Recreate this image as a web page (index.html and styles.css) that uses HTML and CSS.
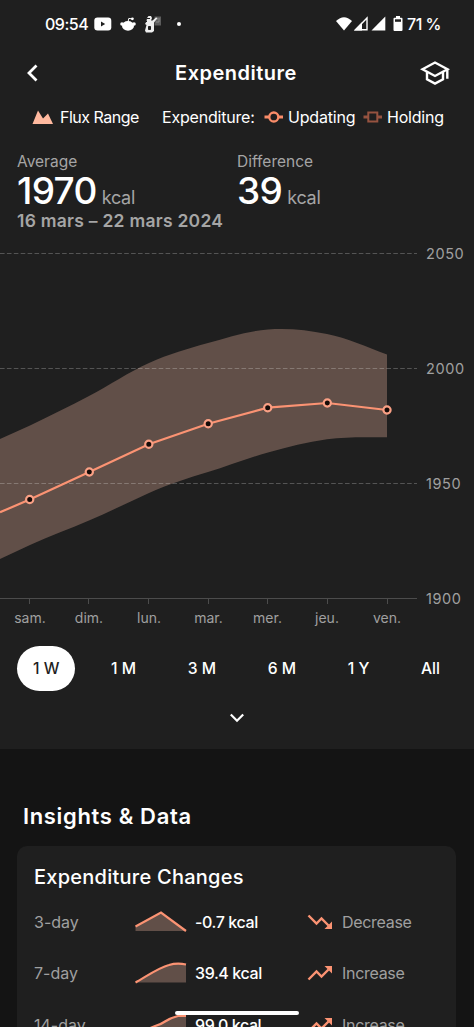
FILE: index.html
```html
<!DOCTYPE html>
<html lang="en">
  <head>
    <meta charset="UTF-8" />
    <meta name="viewport" content="width=device-width, initial-scale=1.0" />
    <title>Expenditure</title>
    <link rel="stylesheet" href="styles.css">
  </head>
  <body>
    <div class="top-panel">
      <!-- Status bar -->
      <div class="status-bar">
        <span class="clock">09:54</span>
        <svg class="icon-video" width="18" height="14" viewBox="0 0 18 14">
          <rect x="0.3" y="0.5" width="17" height="13" rx="3.2" fill="#fff" />
          <path d="M7 4.600v4.800L11.200 7z" fill="#1f1f1f" />
        </svg>
        <svg class="icon-alien" width="16" height="16" viewBox="0 0 16 16">
          <ellipse cx="8" cy="9.900" rx="6" ry="4.800" fill="#fff" />
          <circle cx="2" cy="8" r="1.800" fill="#fff" />
          <circle cx="14" cy="8" r="1.800" fill="#fff" />
          <path d="M8 6l.8-3.600 3.200.5" fill="none" stroke="#fff" stroke-width="1" />
          <circle cx="12.400" cy="2.800" r="1.400" fill="#fff" />
        </svg>
        <svg class="icon-game" width="18" height="18" viewBox="0 0 18 18">
          <rect x="10.500" y="1.500" width="6.500" height="9" fill="#5c5c5c" />
          <path d="M12 4h2M15 3v4M12 7h3" stroke="#888" stroke-width="1" />
          <path d="M3 3l1.500-2H7l1 2-1 2.500h1.500L12 2.500l1.500.5L10 7.500v8.500l-2 1.500H2L1 15.500 2.500 10 1 9l1.500-2.500z" fill="#eee" />
          <path d="M3 3.500h3M4.500 11.500h2v3h-2zM1 6.500h2" stroke="#1f1f1f" stroke-width="1" fill="#1f1f1f" />
        </svg>
        <span class="dot"></span>
        <svg class="icon-signal" width="68" height="18" viewBox="0 0 68 18">
          <path d="M1 6Q9 -1.600 17 6L9 15.600z" fill="#fff" />
          <path d="M20.500 14.800L32 3v11.800z" fill="none" stroke="#fff" stroke-width="1.400" />
          <path d="M19 15.500l8-8.200v8.200z" fill="#fff" />
          <path d="M36.500 15.500L50.300 1.500v14z" fill="#fff" />
          <path d="M61 1h4v1.700h1.500q1 0 1 1V15q0 1-1 1h-7q-1 0-1-1V3.700q0-1 1-1H61z" fill="#fff" />
          <path d="M60 4.300h6v2.500h-6z" fill="#1f1f1f" />
        </svg>
        <span class="battery">71 %</span>
      </div>

      <!-- Header -->
      <header class="header">
        <svg width="24" height="24" viewBox="0 0 24 24">
          <path d="M16.500 4.500L9 12l7.500 7.500" fill="none" stroke="#fff" stroke-width="2.800" />
        </svg>
        <h1>Expenditure</h1>
        <svg width="30" height="26" viewBox="0 0 30 26">
          <path d="M2.500 9.300L15 2.500l12.500 6.800L15 16z" fill="none" stroke="#fff" stroke-width="2.400" />
          <path d="M7 12v7.200l8 4.400 8-4.400V12M27.300 9.300v9.500" fill="none" stroke="#fff" stroke-width="2.400" />
        </svg>
      </header>

      <!-- Legend -->
      <div class="legend">
        <svg width="22" height="16" viewBox="0 0 22 16">
          <path d="M0.500 15L6 1.500l5 8 5-5 5 10.500z" fill="#ffb99f" />
        </svg>
        <span class="legend-flux">Flux Range</span>
        <span class="legend-title">Expenditure:</span>
        <svg width="20" height="14" viewBox="0 0 20 14">
          <path d="M0.500 7h5M14 7h5" stroke="#f98c69" stroke-width="3" />
          <circle cx="9.800" cy="7" r="4.500" fill="none" stroke="#f98c69" stroke-width="2.300" />
        </svg>
        <span class="legend-updating">Updating</span>
        <svg width="20" height="14" viewBox="0 0 20 14">
          <path d="M0.500 7h5M14 7h5" stroke="#965340" stroke-width="3" />
          <rect x="5.300" y="2.500" width="9" height="9" fill="none" stroke="#965340" stroke-width="2" />
        </svg>
        <span class="legend-holding">Holding</span>
      </div>

      <!-- Stats -->
      <div class="stats">
        <div class="stat">
          <p class="stat-label">Average</p>
          <p class="stat-value">1970 <small>kcal</small></p>
          <p class="stat-dates">16 mars – 22 mars 2024</p>
        </div>
        <div class="stat">
          <p class="stat-label">Difference</p>
          <p class="stat-value">39 <small>kcal</small></p>
        </div>
      </div>

      <!-- Chart -->
      <svg class="chart" width="474" height="390" viewBox="0 0 474 390">
        <path class="band" d="M0 199C10 194.500 20 190 30 185.500C50 175.900 69 166.500 89 156C109 145.400 129 132 149 123C169 114 188 108.600 208 103C228 97.400 248 91 268 89.500C288 88 307 90 327 94C347 98 367 107 387 114.500V197.300C367 197.300 347 196.500 327 199.300C307 202 288 207 268 212.500C248 218 228 226 208 232C188 238 169 244 149 253C129 262 109 272 89 280.500C69 289 50 296 30 305C20 310 10 314 0 319z" />
        <path class="grid" d="M0 13.500H417M0 128.500H417M0 243.500H417" />
        <path class="axis" d="M0 358.500H417M29.500 358v6M88.500 358v6M148.500 358v6M208.500 358v6M267.500 358v6M327.500 358v6M387.500 358v6" />
        <polyline class="line" points="0,272.300 29.700,259.500 89.300,232 148.800,204.300 208.200,183.700 267.700,167.700 327.300,163 387,170" />
        <g class="markers">
          <circle cx="29.700" cy="259.500" r="3.600" />
          <circle cx="89.300" cy="232" r="3.600" />
          <circle cx="148.800" cy="204.300" r="3.600" />
          <circle cx="208.200" cy="183.700" r="3.600" />
          <circle cx="267.700" cy="167.700" r="3.600" />
          <circle cx="327.300" cy="163" r="3.600" />
          <circle cx="387" cy="170" r="3.600" />
        </g>
        <g class="y-labels">
          <text x="426" y="19">2050</text>
          <text x="426" y="134">2000</text>
          <text x="426" y="249">1950</text>
          <text x="426" y="364">1900</text>
        </g>
        <g class="x-labels">
          <text x="30" y="383">sam.</text>
          <text x="89" y="383">dim.</text>
          <text x="149" y="383">lun.</text>
          <text x="208.500" y="383">mar.</text>
          <text x="267.500" y="383">mer.</text>
          <text x="327" y="383">jeu.</text>
          <text x="387" y="383">ven.</text>
        </g>
      </svg>

      <!-- Time range -->
      <div class="ranges">
        <button class="active">1 W</button>
        <button>1 M</button>
        <button>3 M</button>
        <button>6 M</button>
        <button>1 Y</button>
        <button>All</button>
      </div>
      <svg class="chevron" width="20" height="14" viewBox="0 0 20 14">
        <path d="M3.800 3.500L10 9.800l6.200-6.300" fill="none" stroke="#fff" stroke-width="2.200" />
      </svg>
    </div>

    <!-- Insights -->
    <section class="insights">
      <h2>Insights &amp; Data</h2>
      <div class="card">
        <h3>Expenditure Changes</h3>
        <div class="row">
          <span class="period">3-day</span>
          <svg width="52" height="24" viewBox="0 0 52 24">
            <path class="band" d="M0.500 16.500L26 2.500l25 18.500H0.500z" />
            <path class="line" d="M0.500 16.500L26 2.500l25 18.500" />
          </svg>
          <span class="amount">-0.7 kcal</span>
          <svg width="26" height="18" viewBox="0 0 26 18">
            <path class="trend" d="M1.500 2.500l8 8 5-5 7 7" />
            <path class="trend-head" d="M25 8.500V16h-7.500z" />
          </svg>
          <span class="trend-text">Decrease</span>
        </div>
        <div class="row">
          <span class="period">7-day</span>
          <svg width="52" height="24" viewBox="0 0 52 24">
            <path class="band" d="M0.500 21.500C12 15 24 6.500 34 4Q42 1.500 51 3.500V21.500z" />
            <path class="line" d="M0.500 21.500C12 15 24 6.500 34 4Q42 1.500 51 3.500" />
          </svg>
          <span class="amount">39.4 kcal</span>
          <svg width="26" height="18" viewBox="0 0 26 18">
            <path class="trend" d="M1.500 15.500l8-8 5 5 7-7" />
            <path class="trend-head" d="M25 9.500V2h-7.500z" />
          </svg>
          <span class="trend-text">Increase</span>
        </div>
        <div class="row">
          <span class="period">14-day</span>
          <svg width="52" height="24" viewBox="0 0 52 24">
            <path class="band" d="M0.500 21.500L20 13Q25 12 30 8.500T43 3H51V21.500z" />
            <path class="line" d="M0.500 21.500L20 13Q25 12 30 8.500T43 3H51" />
          </svg>
          <span class="amount">99.0 kcal</span>
          <svg width="26" height="18" viewBox="0 0 26 18">
            <path class="trend" d="M1.500 15.500l8-8 5 5 7-7" />
            <path class="trend-head" d="M25 9.500V2h-7.500z" />
          </svg>
          <span class="trend-text">Increase</span>
        </div>
      </div>
    </section>

    <div class="home-bar"></div>
  </body>
</html>
```
FILE: styles.css
```css
* {
  margin: 0;
  padding: 0;
  box-sizing: border-box;
}

body {
  width: 474px;
  height: 1027px;
  overflow: hidden;
  background-color: #141414;
  color: #fff;
  font-family: Inter, "Liberation Sans", sans-serif;
  white-space: nowrap;
}

svg {
  display: block;
  flex-shrink: 0;
}

.top-panel {
  height: 749px;
  background-color: #1f1f1f;
}

/* Status bar */
.status-bar {
  display: flex;
  align-items: center;
  height: 48px;
  padding-left: 45px;
  font-size: 16px;
  font-weight: 500;
  letter-spacing: -0.5px;
}

.clock {
  width: 49px;
}

.icon-alien {
  margin-left: 8px;
}

.icon-game {
  margin-left: 8px;
}

.dot {
  width: 4px;
  height: 4px;
  margin-left: 15px;
  border-radius: 50%;
  background-color: #fff;
}

.icon-signal {
  margin-left: 154px;
}

.battery {
  margin-left: 4px;
}

/* Header */
.header {
  display: flex;
  justify-content: space-between;
  align-items: center;
  height: 50px;
  padding: 0 24px 0 20px;
}

.header h1 {
  font-size: 20px;
  font-weight: 600;
  letter-spacing: 0.5px;
  padding-left: 8px;
}

/* Legend */
.legend {
  display: flex;
  align-items: center;
  height: 38px;
  padding-left: 32px;
  font-size: 16px;
  letter-spacing: -0.2px;
}

.legend-flux {
  width: 102px;
  margin-left: 6px;
  letter-spacing: -0.5px;
}

.legend-title {
  width: 102px;
}

.legend-updating {
  width: 75px;
  margin-left: 4px;
}

.legend-holding {
  margin-left: 4px;
}

/* Stats */
.stats {
  display: grid;
  grid-template-columns: 220px 1fr;
  height: 104px;
  padding: 16px 17px 0;
  color: #a5a5a5;
}

.stat-label {
  font-size: 15.5px;
  line-height: 20px;
}

.stat-value {
  color: #fff;
  font-size: 37px;
  font-weight: 450;
  letter-spacing: -0.7px;
  line-height: 38px;
  word-spacing: -4px;
}

.stat-value small {
  color: #a5a5a5;
  font-size: 18px;
  font-weight: 400;
  letter-spacing: -0.3px;
  line-height: 1;
}

.stat-dates {
  font-size: 17.5px;
  font-weight: 600;
  letter-spacing: 0.25px;
  line-height: 22px;
}

/* Chart */
.band {
  fill: #614f48;
}

.line {
  fill: none;
  stroke: #fb9373;
  stroke-width: 2.2;
}

.grid {
  fill: none;
  stroke: rgba(255, 255, 255, 0.24);
  stroke-dasharray: 4.6 2.3;
}

.axis {
  fill: none;
  stroke: #4c4c4c;
}

.markers circle {
  fill: #150b08;
  stroke: #faa085;
  stroke-width: 2.2;
}

.y-labels,
.x-labels {
  fill: #a0a0a0;
  font-size: 14.5px;
}

.y-labels {
  letter-spacing: 0.6px;
}

.x-labels {
  font-size: 14px;
  text-anchor: middle;
}

/* Time range */
.ranges {
  display: flex;
  justify-content: space-between;
  margin-top: 16px;
  padding: 0 18px 0 17px;
}

.ranges button {
  height: 45px;
  padding: 0 16px;
  border: none;
  border-radius: 23px;
  background: none;
  color: #fff;
  font-family: inherit;
  font-size: 15.7px;
  font-weight: 500;
}

.ranges .active {
  background-color: #fff;
  color: #1f1f1f;
}

.chevron {
  margin: 20px auto 0;
}

/* Insights */
.insights {
  height: 278px;
  padding: 52px 17px 0;
  overflow: hidden;
}

.insights h2 {
  padding-left: 6px;
  font-size: 22px;
  font-weight: 600;
  letter-spacing: 0.65px;
  line-height: 30px;
}

.card {
  margin-top: 15px;
  padding: 16px 17px;
  width: 439px;
  height: 260px;
  border-radius: 10px;
  background-color: #1f1f1f;
}

.card h3 {
  font-size: 20px;
  font-weight: 500;
  letter-spacing: 0.25px;
  line-height: 30px;
}

.row {
  display: grid;
  grid-template-columns: 101px 60px 112px 35px 1fr;
  align-items: center;
  height: 51.5px;
  font-size: 16px;
}

.card h3 + .row {
  margin-top: 4px;
}

.period,
.trend-text {
  color: #a0a0a0;
}

.trend-text {
  letter-spacing: -0.3px;
}

.amount {
  font-weight: 500;
  letter-spacing: -0.4px;
}

.trend {
  fill: none;
  stroke: #fb9373;
  stroke-width: 2.4;
}

.trend-head {
  fill: #fb9373;
}

/* Home indicator sits over the scrolling content */
.home-bar {
  position: fixed;
  bottom: 12px;
  left: 175px;
  width: 124px;
  height: 4px;
  border-radius: 2px;
  background-color: #fff;
}
```
